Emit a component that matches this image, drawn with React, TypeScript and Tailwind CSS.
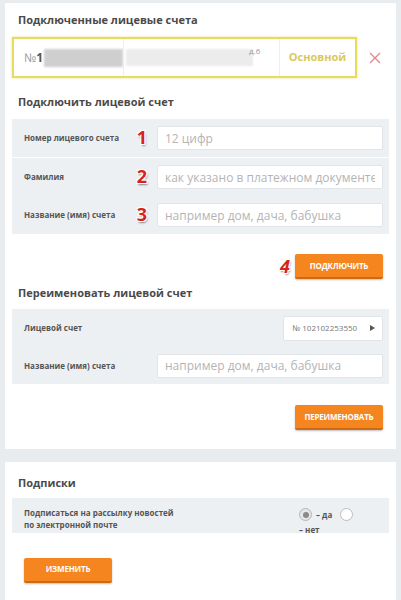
const font = "font-['Open_Sans','Liberation_Sans',sans-serif]";

const Marker = ({ n }: { n: string }) => (
  <span className="text-[18px] leading-none font-bold text-[#d4241c] [text-shadow:1px_1px_0_#fff,-1px_-1px_0_#fff,1px_-1px_0_#fff,-1px_1px_0_#fff,1px_2px_2px_rgba(0,0,0,0.45)]">
    {n}
  </span>
);

const OrangeButton = ({ label }: { label: string }) => (
  <button className="h-[25px] w-[88px] rounded-[2px] bg-[#f5851f] border-b-2 border-[#cf6a14] shadow-[0_1px_2px_rgba(0,0,0,0.25)] text-[8px] font-bold uppercase text-white tracking-tight">
    {label}
  </button>
);

const Field = ({ placeholder }: { placeholder: string }) => (
  <input
    placeholder={placeholder}
    className="h-[24px] w-[226px] rounded-[2px] border border-[#e1e4e8] bg-white px-[7px] text-[12px] text-[#555] placeholder:text-[#b4b4b4] outline-none"
  />
);

const Row = ({ label, marker, children, h }: { label: string; marker?: string; children: React.ReactNode; h: string }) => (
  <div className={`flex items-center pl-[12px] pr-[6px] ${h}`}>
    <span className="flex-1 text-[8px] font-bold text-[#555]">{label}</span>
    {marker && <span className="mr-[10px]"><Marker n={marker} /></span>}
    {children}
  </div>
);

const Title = ({ text, className = "" }: { text: string; className?: string }) => (
  <div className={`pl-[6px] text-[11px] leading-[14px] font-bold text-[#4a4a4a] ${className}`}>{text}</div>
);

export default function App() {
  return (
    <div className={`w-[401px] h-[600px] overflow-hidden bg-[#e9ecef] px-[5px] pt-[3px] ${font}`}>
      <div className="w-[391px] bg-white px-[7px] pt-[10px] pb-[19px]">
        <Title text="Подключенные лицевые счета" />

        <div className="mt-[10px] flex items-center">
          <div className="flex h-[41px] w-[345px] border-2 border-[#e8dc5c] shadow-[0_0_2px_rgba(220,200,60,0.6)]">
            <div className="flex w-[109px] items-center pl-[10px]">
              <span className="text-[12px] text-[#9a9a9a]">№</span>
              <span className="text-[12px] font-bold text-[#555]">1</span>
              <div className="ml-[1px] h-[18px] flex-1 bg-[#cfcfcf] blur-[1px]" />
            </div>
            <div className="relative flex flex-1 items-center border-l border-[#efefef] pl-[2px]">
              <div className="h-[17px] w-[127px] bg-[#ececec] blur-[1px]" />
              <span className="absolute left-[125px] top-[6px] text-[8px] text-[#999]">д.6</span>
            </div>
            <div className="flex w-[76px] items-center justify-center border-l border-[#efefef] text-[11px] font-bold text-[#d8c95e]">
              Основной
            </div>
          </div>
          <svg className="ml-[12px]" width="12" height="12" viewBox="0 0 12 12">
            <path d="M1 1L11 11M11 1L1 11" stroke="#e38a8c" strokeWidth="1.4" />
          </svg>
        </div>

        <Title text="Подключить лицевой счет" className="mt-[17px]" />

        <div className="mt-[10px] bg-[#edf0f3]">
          <Row label="Номер лицевого счета" marker="1" h="h-[38px]">
            <Field placeholder="12 цифр" />
          </Row>
          <div className="h-px bg-white" />
          <Row label="Фамилия" marker="2" h="h-[38px]">
            <Field placeholder="как указано в платежном документе" />
          </Row>
          <Row label="Название (имя) счета" marker="3" h="h-[38px]">
            <Field placeholder="например дом, дача, бабушка" />
          </Row>
        </div>

        <div className="mt-[20px] flex items-center justify-end pr-[6px]">
          <span className="mr-[5px] italic"><Marker n="4" /></span>
          <OrangeButton label="Подключить" />
        </div>

        <Title text="Переименовать лицевой счет" className="mt-[7px]" />

        <div className="mt-[9px] bg-[#edf0f3]">
          <Row label="Лицевой счет" h="h-[38px]">
            <div className="flex h-[25px] w-[100px] items-center justify-between rounded-[2px] border border-[#e1e4e8] bg-white pl-[8px] pr-[7px]">
              <span className="text-[8px] text-[#777]">№ 102102253550</span>
              <svg width="5" height="6" viewBox="0 0 5 6">
                <path d="M0 0L5 3L0 6Z" fill="#555" />
              </svg>
            </div>
          </Row>
          <Row label="Название (имя) счета" h="h-[37px]">
            <Field placeholder="например дом, дача, бабушка" />
          </Row>
        </div>

        <div className="mt-[21px] flex justify-end pr-[6px]">
          <OrangeButton label="Переименовать" />
        </div>
      </div>

      <div className="mt-[13px] w-[391px] bg-white px-[7px] pt-[14px] pb-[20px]">
        <Title text="Подписки" />
        <div className="mt-[8px] flex h-[35px] bg-[#edf0f3] pl-[12px] pt-[9px]">
          <div className="flex-1 text-[8px] leading-[12px] font-bold text-[#555]">
            Подписаться на рассылку новостей
            <br />
            по электронной почте
          </div>
          <div className="mr-[28px] flex w-[62px] flex-wrap items-center text-[8px] leading-[15px] font-bold text-[#555]">
            <span className="flex h-[13px] w-[13px] items-center justify-center rounded-full border border-[#b5b5b5] bg-[#e6e6e6]">
              <span className="h-[6px] w-[6px] rounded-full bg-[#8a8a8a]" />
            </span>
            <span className="ml-[4px]">– да</span>
            <span className="ml-[8px] h-[13px] w-[13px] rounded-full border border-[#bdbdbd] bg-white" />
            <span className="w-full">– нет</span>
          </div>
        </div>
        <div className="mt-[21px] pl-[12px]">
          <OrangeButton label="Изменить" />
        </div>
      </div>
    </div>
  );
}
